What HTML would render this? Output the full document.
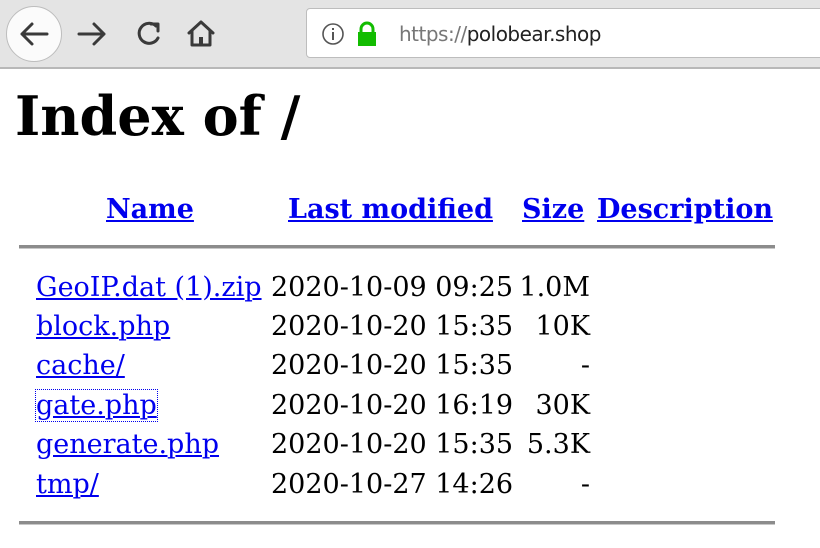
<!DOCTYPE html>
<html><head><meta charset="utf-8"><style>
body{margin:0;width:820px;height:548px;overflow:hidden;background:#fff;font-family:"DejaVu Serif",serif;position:relative}
.bar{position:absolute;left:0;top:0;width:820px;height:67px;background:#e4e4e4;border-bottom:2px solid #b8b8b8}
.back{position:absolute;left:6px;top:6px;width:54px;height:54px;border-radius:50%;background:#fbfbfb;border:1px solid #bdbdbd}
.url{position:absolute;left:306px;top:8px;width:530px;height:48px;background:#fff;border:1px solid #bdbdbd;border-radius:4px}
.url span{position:absolute;left:92px;top:13px;font:20px "DejaVu Sans",sans-serif;color:#222;letter-spacing:-0.5px}
.t{position:absolute;white-space:nowrap;font-size:27px;line-height:30px}
a{color:#0000ee;text-decoration:underline}
h1{position:absolute;left:15px;top:86px;margin:0;font-size:54px;line-height:60px;font-weight:bold}
.h{font-weight:bold;font-size:27px}
.hr{position:absolute;left:19px;width:756px;height:3px;background:#8c8c8c;border-bottom:1px solid #c8c8c8}
.r{text-align:right}
</style></head><body>
<div class="bar">
<div class="back"></div>
<svg style="position:absolute;left:0;top:0" width="300" height="67" fill="none" stroke="#3a3a3a" stroke-width="3" stroke-linecap="round" stroke-linejoin="round">
<path d="M47 34H22M32 24L22 34L32 44"/>
<path d="M79 34H104M94 24L104 34L94 44"/>
<path d="M156 26A10 10 0 1 0 158 38"/><path d="M151 24H158V31" />
<path d="M189 33L201 22L213 33M192 31V45H210V31"/><rect x="199" y="37" width="4" height="8" fill="#3a3a3a" stroke="none"/>
</svg>
<div class="url">
<svg style="position:absolute;left:14px;top:12px" width="60" height="26"><circle cx="12" cy="13" r="10" fill="none" stroke="#555" stroke-width="1.6"/><rect x="11" y="11" width="2" height="8" fill="#555"/><rect x="11" y="7" width="2" height="2" fill="#555"/>
<rect x="37" y="11" width="18" height="14" fill="#12bc00"/><path d="M40 12V8A6 6 0 0 1 52 8V12" fill="none" stroke="#12bc00" stroke-width="3"/></svg>
<span><span style="position:static;color:#777">https://</span>polobear.shop</span>
</div>
</div>
<h1>Index of /</h1>
<div class="t h" style="left:106px;top:195px"><a>Name</a></div>
<div class="t h" style="left:288px;top:195px"><a>Last modified</a></div>
<div class="t h" style="left:522px;top:195px"><a>Size</a></div>
<div class="t h" style="left:597px;top:195px"><a>Description</a></div>
<div class="hr" style="top:245px"></div>
<div class="t" style="left:36px;top:273px"><a>GeoIP.dat (1).zip</a></div>
<div class="t" style="left:36px;top:312px"><a>block.php</a></div>
<div class="t" style="left:36px;top:351px"><a>cache/</a></div>
<div class="t" style="left:36px;top:391px"><a style="outline:1px dotted #0000ee">gate.php</a></div>
<div class="t" style="left:36px;top:430px"><a>generate.php</a></div>
<div class="t" style="left:36px;top:470px"><a>tmp/</a></div>
<div class="t" style="left:271px;top:273px">2020-10-09 09:25</div>
<div class="t" style="left:271px;top:312px">2020-10-20 15:35</div>
<div class="t" style="left:271px;top:351px">2020-10-20 15:35</div>
<div class="t" style="left:271px;top:391px">2020-10-20 16:19</div>
<div class="t" style="left:271px;top:430px">2020-10-20 15:35</div>
<div class="t" style="left:271px;top:470px">2020-10-27 14:26</div>
<div class="t r" style="left:500px;width:90px;top:273px">1.0M</div>
<div class="t r" style="left:500px;width:90px;top:312px">10K</div>
<div class="t r" style="left:500px;width:90px;top:351px">-</div>
<div class="t r" style="left:500px;width:90px;top:391px">30K</div>
<div class="t r" style="left:500px;width:90px;top:430px">5.3K</div>
<div class="t r" style="left:500px;width:90px;top:470px">-</div>
<div class="hr" style="top:521px"></div>
</body></html>
